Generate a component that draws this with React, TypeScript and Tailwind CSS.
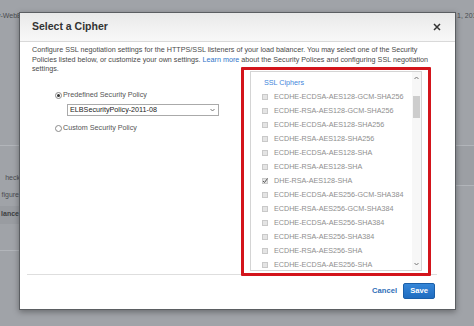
import React from "react";

const ciphers = [
  { name: "ECDHE-ECDSA-AES128-GCM-SHA256", checked: false },
  { name: "ECDHE-RSA-AES128-GCM-SHA256", checked: false },
  { name: "ECDHE-ECDSA-AES128-SHA256", checked: false },
  { name: "ECDHE-RSA-AES128-SHA256", checked: false },
  { name: "ECDHE-ECDSA-AES128-SHA", checked: false },
  { name: "ECDHE-RSA-AES128-SHA", checked: false },
  { name: "DHE-RSA-AES128-SHA", checked: true },
  { name: "ECDHE-ECDSA-AES256-GCM-SHA384", checked: false },
  { name: "ECDHE-RSA-AES256-GCM-SHA384", checked: false },
  { name: "ECDHE-ECDSA-AES256-SHA384", checked: false },
  { name: "ECDHE-RSA-AES256-SHA384", checked: false },
  { name: "ECDHE-RSA-AES256-SHA", checked: false },
  { name: "ECDHE-ECDSA-AES256-SHA", checked: false },
];

function Chevron({ up }: { up?: boolean }) {
  return (
    <svg width="5" height="4" viewBox="0 0 5 4" className="text-[#777]">
      <path
        d={up ? "M0.5 3 L2.5 1 L4.5 3" : "M0.5 1 L2.5 3 L4.5 1"}
        fill="none"
        stroke="currentColor"
        strokeWidth="1"
      />
    </svg>
  );
}

function Radio({ on }: { on?: boolean }) {
  return (
    <span className="flex h-[7px] w-[7px] shrink-0 items-center justify-center rounded-full border border-[#8a8a8a] bg-white">
      {on && <span className="h-[3px] w-[3px] rounded-full bg-[#333]" />}
    </span>
  );
}

export default function App() {
  return (
    <div className="relative h-[326px] w-[474px] overflow-hidden bg-[#a0a3a8] font-['Liberation_Sans',Arial,sans-serif]">
      {/* page behind the dialog */}
      <div className="flex items-start justify-between pt-[11px] text-[7px] text-[#4a4c50]">
        <div className="-ml-[3px] whitespace-nowrap">y-WebELB</div>
        <div className="w-[17px] overflow-hidden whitespace-nowrap">1, 2016</div>
      </div>
      <div className="mt-[123px] border-t border-[#b2b5ba]" />
      <div className="flex justify-between">
        <div className="w-[19px] text-[7px] text-[#4a4c50]">
          <div className="flex justify-end overflow-hidden whitespace-nowrap pt-[27px]">
            <span className="-mr-[1px]">heck</span>
          </div>
          <div className="mt-[7px] flex justify-end overflow-hidden whitespace-nowrap">figure</div>
          <div className="mt-[5px] flex h-[18px] items-center justify-end overflow-hidden whitespace-nowrap bg-[#999ca1] font-bold text-[#3d3f42]">
            lance
          </div>
          <div className="mt-[26px] border-t border-[#b2b5ba]" />
        </div>
        <div className="h-[40px] w-[19px] border-b border-[#b2b5ba] bg-[#9c9fa4]" />
      </div>

      {/* dialog */}
      <div className="absolute left-[19px] top-[12px] w-[437px] border border-[#5b5e62] bg-white shadow-[0_2px_6px_rgba(0,0,0,0.35)]">
        <div className="flex h-[29px] items-center justify-between border-b border-[#d9d9d9] bg-gradient-to-b from-[#e9e9e9] to-[#f8f8f8] pl-[12px] pr-[14px]">
          <span className="text-[10.5px] font-bold text-[#333]">Select a Cipher</span>
          <svg width="8" height="8" viewBox="0 0 8 8">
            <path d="M1 1 L7 7 M7 1 L1 7" stroke="#333" strokeWidth="1.5" />
          </svg>
        </div>

        <div className="pl-[12px] pr-[24px] pt-[3px]">
          <p className="text-[7.2px] leading-[9.5px] text-[#4a4a4a]">
            Configure SSL negotiation settings for the HTTPS/SSL listeners of your load balancer. You may select one of the Security
            Policies listed below, or customize your own settings.{" "}
            <span className="text-[#2f74c8]">Learn more</span> about the Security Polices and configuring SSL negotiation
            settings.
          </p>

          <div className="-mt-[2.5px] flex h-[200px] justify-between">
            <div className="pl-[23px] pt-[19px] text-[7.2px] text-[#555]">
              <div className="flex h-[10px] items-center gap-[1px]">
                <Radio on />
                <span>Predefined Security Policy</span>
              </div>
              <div className="ml-[12px] mt-[4px] flex h-[12px] w-[152px] items-center justify-between border border-[#aaa] bg-white pl-[2px] pr-[3px] text-[7.2px] text-[#222]">
                <span>ELBSecurityPolicy-2011-08</span>
                <Chevron />
              </div>
              <div className="mt-[7px] flex h-[10px] items-center gap-[1px]">
                <Radio />
                <span>Custom Security Policy</span>
              </div>
            </div>

            <div className="mr-[9px] flex w-[172px] border border-[#d4d4d4] bg-white">
              <div className="flex-1 overflow-hidden pt-[4px]">
                <div className="flex h-[14px] items-center pl-[13px] text-[7.2px] text-[#3f86db]">SSL Ciphers</div>
                {ciphers.map((c) => (
                  <div key={c.name} className="flex h-[14px] items-center gap-[6px] pl-[11px] text-[7.2px] text-[#8e8e8e]">
                    <span className="relative flex h-[6px] w-[6px] shrink-0 items-center justify-center border border-[#c9c9c9] bg-[#e4e4e4]">
                      {c.checked && (
                        <svg width="6" height="6" viewBox="0 0 6 6" className="absolute">
                          <path d="M1 3 L2.5 4.5 L5.5 0.5" fill="none" stroke="#555" strokeWidth="1" />
                        </svg>
                      )}
                    </span>
                    <span className="whitespace-nowrap">{c.name}</span>
                  </div>
                ))}
              </div>
              <div className="flex w-[9px] flex-col items-center bg-[#f7f7f7]">
                <div className="flex h-[9px] items-center pt-[2px]">
                  <Chevron up />
                </div>
                <div className="mt-[15px] h-[22px] w-[7px] bg-[#cdcdcd]" />
                <div className="flex-1" />
                <div className="flex h-[10px] items-center pb-[3px]">
                  <Chevron />
                </div>
              </div>
            </div>
          </div>
        </div>

        <div className="ml-[7px] mr-[18px] mt-[3px] border-t border-[#dedede]" />
        <div className="flex items-center justify-end gap-[6px] pb-[10px] pr-[20px] pt-[8px]">
          <span className="text-[7.6px] font-bold text-[#2f6fb8]">Cancel</span>
          <button className="h-[16px] w-[32px] rounded-[2px] border border-[#1b5fa8] bg-gradient-to-b from-[#3586d8] to-[#1f6cc0] text-[7.6px] font-bold text-white">
            Save
          </button>
        </div>

        {/* red highlight annotation */}
        <div className="pointer-events-none absolute left-[221px] top-[54px] h-[209px] w-[190px] rounded-[1px] border-[3px] border-[#d3141b]" />
      </div>
    </div>
  );
}
